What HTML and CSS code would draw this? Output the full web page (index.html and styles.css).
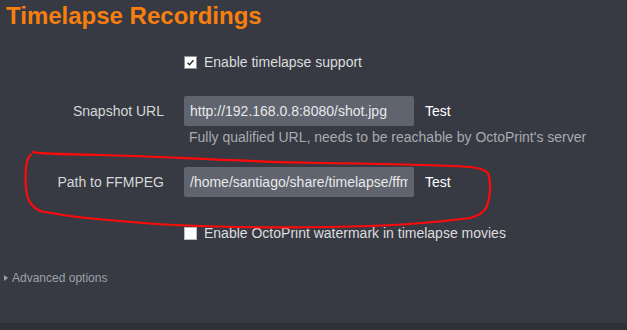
FILE: index.html
```html
<!DOCTYPE html>
<html lang="en">
<head>
<meta charset="utf-8">
<title>Timelapse Recordings</title>
<link rel="stylesheet" href="styles.css">
</head>
<body>
<div class="page">
  <div class="panel">
    <h1 class="title">Timelapse Recordings</h1>
    <div class="form">
      <div class="row row-check first">
        <label class="check"><span class="box"><svg viewBox="0 0 13 13" width="13" height="13"><path d="M3 6.8 L5.4 9.2 L10 3.8" fill="none" stroke="#2b2d31" stroke-width="1.6"/></svg></span>Enable timelapse support</label>
      </div>
      <div class="row row-field url">
        <label class="field-label">Snapshot URL</label>
        <input class="field-input" type="text" value="http://192.168.0.8:8080/shot.jpg">
        <span class="test">Test</span>
        <span class="help">Fully qualified URL, needs to be reachable by OctoPrint's server</span>
      </div>
      <div class="row row-field path">
        <label class="field-label">Path to FFMPEG</label>
        <input class="field-input" type="text" value="/home/santiago/share/timelapse/ffmpeg">
        <span class="test">Test</span>
      </div>
      <div class="row row-check last">
        <label class="check"><span class="box empty"></span>Enable OctoPrint watermark in timelapse movies</label>
      </div>
    </div>
    <div class="advanced"><span class="caret"></span>Advanced options</div>
  </div>
  <div class="footer"></div>
  <svg class="annotation" viewBox="0 0 627 330" width="627" height="330">
    <path d="M33,152 C36,154 60,154 100,155 C160,156 220,161 320,163 C400,164 440,165 470,167 C480,168 485,170 488,173 C491,181 491,197 486,208 C483,213 478,216 470,218 C440,222 400,226 330,227 C260,228 180,227 120,221 C80,218 55,214 40,211 C34,208 28,202 27,195 C25,185 25,170 27,162 C28,158 29,156 31,155" fill="none" stroke="#ff0a0a" stroke-width="2.2" stroke-linecap="round" stroke-linejoin="round"/>
  </svg>
</div>
</body>
</html>
```

FILE: styles.css
```css
html, body {
  margin: 0;
  padding: 0;
}

body {
  background: #373a42;
  font-family: "Liberation Sans", Arial, sans-serif;
  font-size: 14px;
  color: #d6d7d9;
}

.page {
  position: relative;
  width: 627px;
  height: 330px;
  display: flex;
  flex-direction: column;
  overflow: hidden;
}

.panel {
  flex: 1;
  background: #373a42;
  border-right: 1px solid #30333a;
}

.footer {
  height: 7px;
  background: #2f3136;
}

.title {
  margin: 0;
  padding: 1px 0 0 6px;
  font-size: 24px;
  line-height: 30px;
  font-weight: bold;
  color: #f77f0e;
}

.row {
  display: grid;
  grid-template-columns: 164px 230px auto;
  column-gap: 20px;
}

.row-check {
  height: 20px;
  line-height: 20px;
}

.row-check.first {
  margin-top: 21px;
}

.row-check.last {
  margin-top: 26px;
}

.check {
  grid-column: 2 / 4;
  display: flex;
  align-items: center;
  color: #dcdddf;
}

.box {
  width: 11px;
  height: 11px;
  border: 1px solid #8d9096;
  background: #ffffff;
  margin-right: 7px;
  display: flex;
  align-items: center;
  justify-content: center;
  position: relative;
}

.box svg {
  display: block;
  width: 11px;
  height: 11px;
}

.box.empty {
  border-color: #b9bbbf;
}

.row-field {
  align-items: center;
}

.row-field.url {
  margin-top: 24px;
}

.row-field.path {
  margin-top: 20px;
}

.field-label {
  text-align: right;
  line-height: 30px;
  color: #d6d7d9;
}

.field-input {
  box-sizing: border-box;
  width: 230px;
  height: 30px;
  margin: 0;
  border: none;
  border-radius: 2px;
  padding: 0 6px;
  background: #5f646f;
  color: #e9e9ea;
  font-family: "Liberation Sans", Arial, sans-serif;
  font-size: 14px;
  outline: none;
}

.test {
  margin-left: -9px;
  line-height: 30px;
  color: #ffffff;
}

.help {
  grid-column: 2 / 4;
  margin-top: 1px;
  padding-left: 5px;
  line-height: 20px;
  color: #a8abb1;
  white-space: nowrap;
}

.advanced {
  margin-top: 27px;
  padding-left: 4px;
  font-size: 12px;
  line-height: 16px;
  color: #9ca1a8;
  display: flex;
  align-items: center;
}

.caret {
  width: 0;
  height: 0;
  border-top: 3.5px solid transparent;
  border-bottom: 3.5px solid transparent;
  border-left: 4px solid #9ca1a8;
  margin-right: 4px;
}

.annotation {
  position: absolute;
  left: 0;
  top: 0;
  pointer-events: none;
}
```
